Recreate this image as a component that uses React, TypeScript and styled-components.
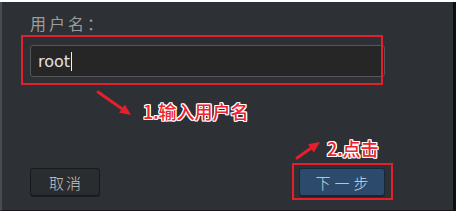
import React from 'react';
import styled, { createGlobalStyle } from 'styled-components';

const GlobalStyle = createGlobalStyle`
  html, body {
    margin: 0;
    padding: 0;
    background: #ffffff;
  }
  body {
    font-family: "Noto Sans CJK SC", "Noto Sans", sans-serif;
  }
`;

/** Frame */
const Frame = styled.div`
  width: 456px;
  height: 213px;
  box-sizing: border-box;
  padding: 2px 0 2px 0;
  background: #ffffff;
`;

/** Dialog */
const Dialog = styled.div`
  position: relative;
  height: 100%;
  box-sizing: border-box;
  border-left: 2px solid #4a4d50;
  border-right: 3px solid #0e0f10;
  border-bottom: 1px solid #17191b;
  background: #2d3135;
  padding: 9px 0 0 28px;
  display: flex;
  flex-direction: column;
`;

const Label = styled.div`
  font-size: 16px;
  line-height: 24px;
  color: #9c9c9c;
  letter-spacing: 3px;
`;

const Field = styled.div`
  margin-top: 10px;
  width: 355px;
  height: 32px;
  box-sizing: border-box;
  border: 1px solid #55575a;
  border-radius: 3px;
  background: #262626;
  display: flex;
  align-items: center;
  padding-left: 7px;
  font-family: "DejaVu Sans", "Noto Sans", sans-serif;
  font-size: 16px;
  color: #e2e2e2;
`;

const Caret = styled.span`
  display: inline-block;
  width: 1px;
  height: 19px;
  margin-left: 1px;
  background: #f0f0f0;
`;

const Actions = styled.div`
  margin-top: 91px;
  width: 355px;
  display: flex;
  justify-content: space-between;
`;

const Button = styled.div<{ primary?: boolean }>`
  width: ${p => (p.primary ? 86 : 70)}px;
  height: 28px;
  box-sizing: border-box;
  border: 1px solid ${p => (p.primary ? '#16283a' : '#17191b')};
  border-radius: 3px;
  background: ${p => (p.primary ? '#2c4b6c' : '#2a2d30')};
  color: ${p => (p.primary ? '#d6dbe0' : '#c8c8c8')};
  font-size: 15px;
  font-weight: 300;
  display: flex;
  align-items: center;
  justify-content: center;
  letter-spacing: ${p => (p.primary ? 4 : 2)}px;
  text-indent: ${p => (p.primary ? 4 : 2)}px;
  box-shadow: 0 1px 0 rgba(0, 0, 0, 0.35);
`;

/** Annotations laid over the dialog */
const Mark = styled.div`
  position: absolute;
  border: 2px solid #e3202b;
  box-sizing: border-box;
`;

const Note = styled.div`
  position: absolute;
  font-size: 18px;
  font-weight: 500;
  line-height: 20px;
  color: #f0222e;
  white-space: nowrap;
  text-shadow:
    1px 0 0 #fff, -1px 0 0 #fff, 0 1px 0 #fff, 0 -1px 0 #fff,
    1px 1px 0 #fff, -1px -1px 0 #fff, 1px -1px 0 #fff, -1px 1px 0 #fff;
`;

const ArrowSvg = styled.svg`
  position: absolute;
  left: -2px;
  top: -2px;
  overflow: visible;
`;

const Arrow: React.FC<{ x1: number; y1: number; x2: number; y2: number }> = ({ x1, y1, x2, y2 }) => {
  const ang = Math.atan2(y2 - y1, x2 - x1);
  const len = 11;
  const w = 5;
  const bx = x2 - Math.cos(ang) * len;
  const by = y2 - Math.sin(ang) * len;
  const px = -Math.sin(ang) * w;
  const py = Math.cos(ang) * w;
  return (
    <g>
      <line x1={x1} y1={y1} x2={bx} y2={by} stroke="#e3202b" strokeWidth={3} strokeLinecap="round" />
      <polygon points={`${x2},${y2} ${bx + px},${by + py} ${bx - px},${by - py}`} fill="#e3202b" />
    </g>
  );
};

export default function App() {
  return (
    <Frame>
      <GlobalStyle />
      <Dialog>
        <Label>用户名：</Label>
        <Field>
          root<Caret />
        </Field>
        <Actions>
          <Button>取消</Button>
          <Button primary>下一步</Button>
        </Actions>

        <Mark style={{ left: 19, top: 33, width: 362, height: 50 }} />
        <Mark style={{ left: 290, top: 161, width: 101, height: 37 }} />
        <ArrowSvg width={456} height={213}>
          <Arrow x1={98} y1={92} x2={131} y2={115} />
          <Arrow x1={297} y1={158} x2={320} y2={142} />
        </ArrowSvg>
        <Note style={{ left: 141, top: 99 }}>1.输入用户名</Note>
        <Note style={{ left: 325, top: 136 }}>2.点击</Note>
      </Dialog>
    </Frame>
  );
}
